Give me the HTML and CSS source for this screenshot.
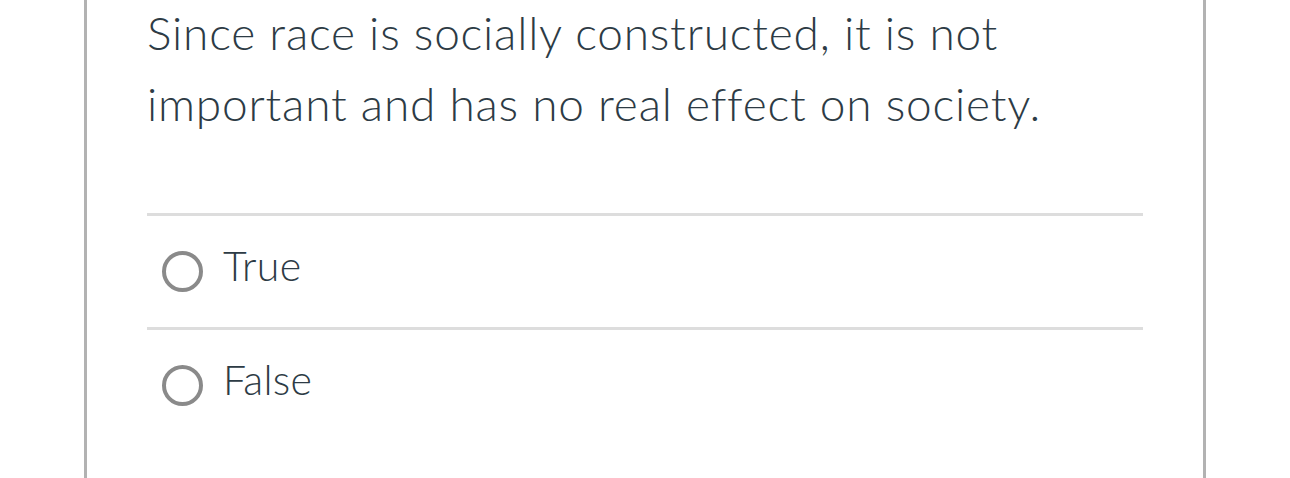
FILE: index.html
```html
<!DOCTYPE html>
<html>
<head>
<meta charset="utf-8">
<link rel="stylesheet" href="styles.css">
</head>
<body>
<div class="page">
  <div class="question">
    <p class="question-text">Since race is socially constructed, it is not important and has no real effect on society.</p>
    <div class="answers">
      <label class="answer">
        <span class="radio"></span>
        <span class="answer-text">True</span>
      </label>
      <label class="answer">
        <span class="radio"></span>
        <span class="answer-text">False</span>
      </label>
    </div>
  </div>
</div>
</body>
</html>
```
FILE: styles.css
```css
html, body {
  margin: 0;
  padding: 0;
  background: #ffffff;
}
body {
  font-family: Lato, "Open Sans", sans-serif;
  color: #2d3b45;
  overflow: hidden;
  height: 478px;
}
.page {
  padding-left: 84px;
  width: 1122px;
}
.question {
  display: flow-root;
  border-left: 3px solid #b2b2b2;
  border-right: 3px solid #b2b2b2;
  padding: 0 60px;
  height: 478px;
}
.question-text {
  margin: -3px 0 0 0;
  font-size: 46px;
  font-weight: 300;
  line-height: 71px;
  letter-spacing: 0.8px;
  padding-bottom: 74px;
}
.answers {
  display: flex;
  flex-direction: column;
}
.answer {
  display: flex;
  align-items: center;
  height: 111px;
  border-top: 3px solid #dddddd;
  padding-left: 15px;
  gap: 20px;
}
.radio {
  width: 33px;
  height: 33px;
  border: 4px solid #8a8a8a;
  border-radius: 50%;
  flex-shrink: 0;
}
.answer-text {
  font-size: 41px;
  font-weight: 300;
  line-height: 50px;
  letter-spacing: 0.3px;
  margin-bottom: 12px;
}
```
